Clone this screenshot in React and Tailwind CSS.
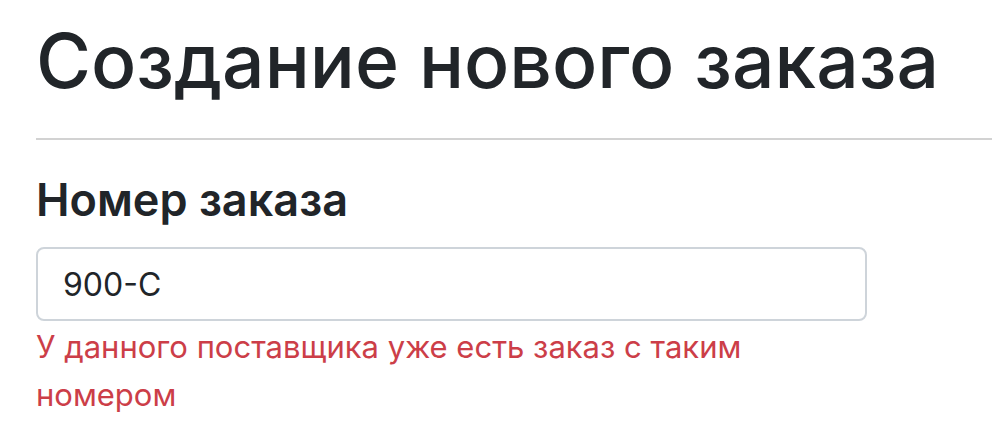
export default function App() {
  return (
    <div
      className="min-h-[438px] overflow-hidden bg-white pl-[36px] pt-[16px] text-[#212529]"
      style={{ fontFamily: "Inter, 'Liberation Sans', sans-serif" }}
    >
      <h1 className="whitespace-nowrap text-[75px] font-medium leading-[90px]">Создание нового заказа</h1>
      <hr className="mt-[32px] border-0 border-t-2 border-[#d2d2d2]" />
      <div className="pt-[32px]">
        <h4 className="text-[45px] font-semibold leading-[55px]">Номер заказа</h4>
        <input
          type="text"
          defaultValue="900-C"
          className="mt-[20px] block h-[74px] w-[831px] rounded-[8px] border-2 border-[#ced4da] bg-white px-[25px] text-[32px] text-[#212529] outline-none"
        />
        <div className="mt-[2px] w-[831px] text-[31px] leading-[48px] text-[#cc3e48]">
          У данного поставщика уже есть заказ с таким номером
        </div>
      </div>
    </div>
  );
}
